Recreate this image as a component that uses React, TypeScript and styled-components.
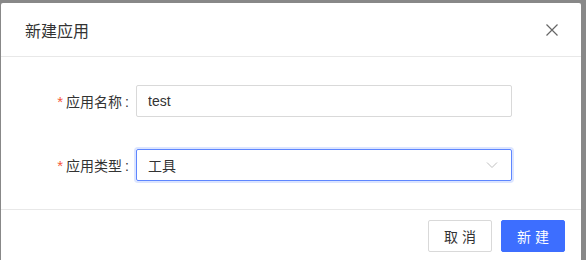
import React, { useState } from 'react';
import styled, { createGlobalStyle } from 'styled-components';

const GlobalStyle = createGlobalStyle`
  html, body {
    margin: 0;
    padding: 0;
    background: #888888;
    font-family: "Liberation Sans", "Noto Sans CJK SC", sans-serif;
  }
  * {
    box-sizing: border-box;
  }
`;

const Page = styled.div`
  width: 586px;
  height: 260px;
  padding: 3px 0 0 1px;
  overflow: hidden;
`;

const Modal = styled.div`
  width: 580px;
  background: #ffffff;
  border-radius: 2px;
`;

const Header = styled.div`
  height: 54px;
  display: flex;
  align-items: center;
  justify-content: space-between;
  padding: 0 22px 0 24px;
  border-bottom: 1px solid #e8e8e8;
`;

const Title = styled.div`
  font-size: 16px;
  color: #333333;
`;

const CloseButton = styled.button`
  border: 0;
  background: transparent;
  padding: 0;
  width: 14px;
  height: 14px;
  display: flex;
  cursor: pointer;
`;

const Body = styled.div`
  padding: 28px 0 28px;
  display: flex;
  flex-direction: column;
  gap: 32px;
  border-bottom: 1px solid #e8e8e8;
`;

const Row = styled.div`
  display: flex;
  align-items: center;
  height: 32px;
`;

const Label = styled.label`
  width: 135px;
  padding-right: 7px;
  text-align: right;
  font-size: 14px;
  color: #333333;
`;

const Star = styled.span`
  color: #f5573b;
  margin-right: 3px;
  font-size: 15px;
`;

const Colon = styled.span`
  margin-left: 3px;
`;

const Input = styled.input`
  width: 376px;
  height: 32px;
  border: 1px solid #d9d9d9;
  border-radius: 2px;
  padding: 0 11px;
  font-size: 14px;
  font-family: inherit;
  color: #333333;
  outline: none;
`;

const Select = styled.div`
  width: 376px;
  height: 32px;
  border: 1px solid #5e86ff;
  border-radius: 2px;
  padding: 0 13px 0 11px;
  display: flex;
  align-items: center;
  justify-content: space-between;
  font-size: 14px;
  color: #333333;
  box-shadow: 0 0 0 2px rgba(61, 110, 255, 0.18);
`;

const Footer = styled.div`
  display: flex;
  justify-content: flex-end;
  gap: 9px;
  padding: 10px 16px 10px;
`;

const Button = styled.button<{ $primary?: boolean }>`
  width: 64px;
  height: 32px;
  border-radius: 2px;
  border: 1px solid ${(p) => (p.$primary ? '#3d6eff' : '#d9d9d9')};
  background: ${(p) => (p.$primary ? '#3d6eff' : '#ffffff')};
  color: ${(p) => (p.$primary ? '#ffffff' : '#333333')};
  font-size: 14px;
  font-family: inherit;
  letter-spacing: 4px;
  text-indent: 4px;
  cursor: pointer;
`;

export default function App() {
  const [name, setName] = useState('test');

  return (
    <>
      <GlobalStyle />
      <Page>
        <Modal>
          <Header>
            <Title>新建应用</Title>
            <CloseButton aria-label="close">
              <svg width="14" height="14" viewBox="0 0 14 14">
                <path d="M1.5 1.5 L12.5 12.5 M12.5 1.5 L1.5 12.5" stroke="#666" strokeWidth="1.2" fill="none" />
              </svg>
            </CloseButton>
          </Header>
          <Body>
            <Row>
              <Label>
                <Star>*</Star>应用名称<Colon>:</Colon>
              </Label>
              <Input value={name} onChange={(e) => setName(e.target.value)} />
            </Row>
            <Row>
              <Label>
                <Star>*</Star>应用类型<Colon>:</Colon>
              </Label>
              <Select>
                <span>工具</span>
                <svg width="12" height="8" viewBox="0 0 12 8">
                  <path d="M1 1.5 L6 6.5 L11 1.5" stroke="#bfbfbf" strokeWidth="1" fill="none" />
                </svg>
              </Select>
            </Row>
          </Body>
          <Footer>
            <Button>取消</Button>
            <Button $primary>新建</Button>
          </Footer>
        </Modal>
      </Page>
    </>
  );
}
